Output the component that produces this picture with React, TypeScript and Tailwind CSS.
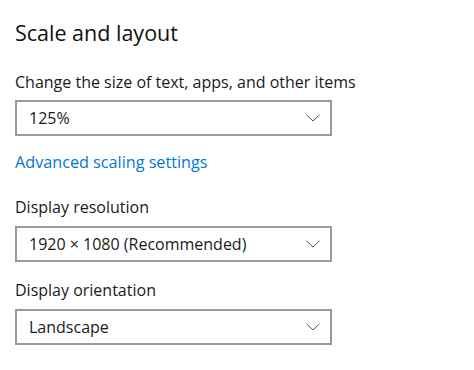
import React from 'react';

interface SelectBoxProps {
  value: string;
}

function SelectBox({ value }: SelectBoxProps) {
  return (
    <div className="flex h-[36px] w-[317px] items-center justify-between border-2 border-[#999999] bg-white pl-[12px] pr-[10px]">
      <span className="text-[16px] text-[#1a1a1a]">{value}</span>
      <svg className="h-[8px] w-[14px]" viewBox="0 0 14 8" fill="none">
        <path d="M0.5 0.8 L7 7 L13.5 0.8" stroke="#555555" strokeWidth="1" />
      </svg>
    </div>
  );
}

export default function App() {
  return (
    <div className="h-[370px] w-[474px] bg-white pl-[15px] pt-[18px] font-['Open_Sans',sans-serif] text-[#1a1a1a]">
      <h1 className="text-[21.5px] leading-[30px] font-normal text-[#111111]">Scale and layout</h1>

      <div className="mt-[24px] text-[16px] leading-[20px]">Change the size of text, apps, and other items</div>
      <div className="mt-[8px]">
        <SelectBox value="125%" />
      </div>

      <div className="mt-[16px] text-[16.2px] leading-[20px] text-[#0078d7]">Advanced scaling settings</div>

      <div className="mt-[25px] text-[16px] leading-[20px]">Display resolution</div>
      <div className="mt-[9px]">
        <SelectBox value="1920 × 1080 (Recommended)" />
      </div>

      <div className="mt-[18px] text-[16px] leading-[20px]">Display orientation</div>
      <div className="mt-[9px]">
        <SelectBox value="Landscape" />
      </div>
    </div>
  );
}
